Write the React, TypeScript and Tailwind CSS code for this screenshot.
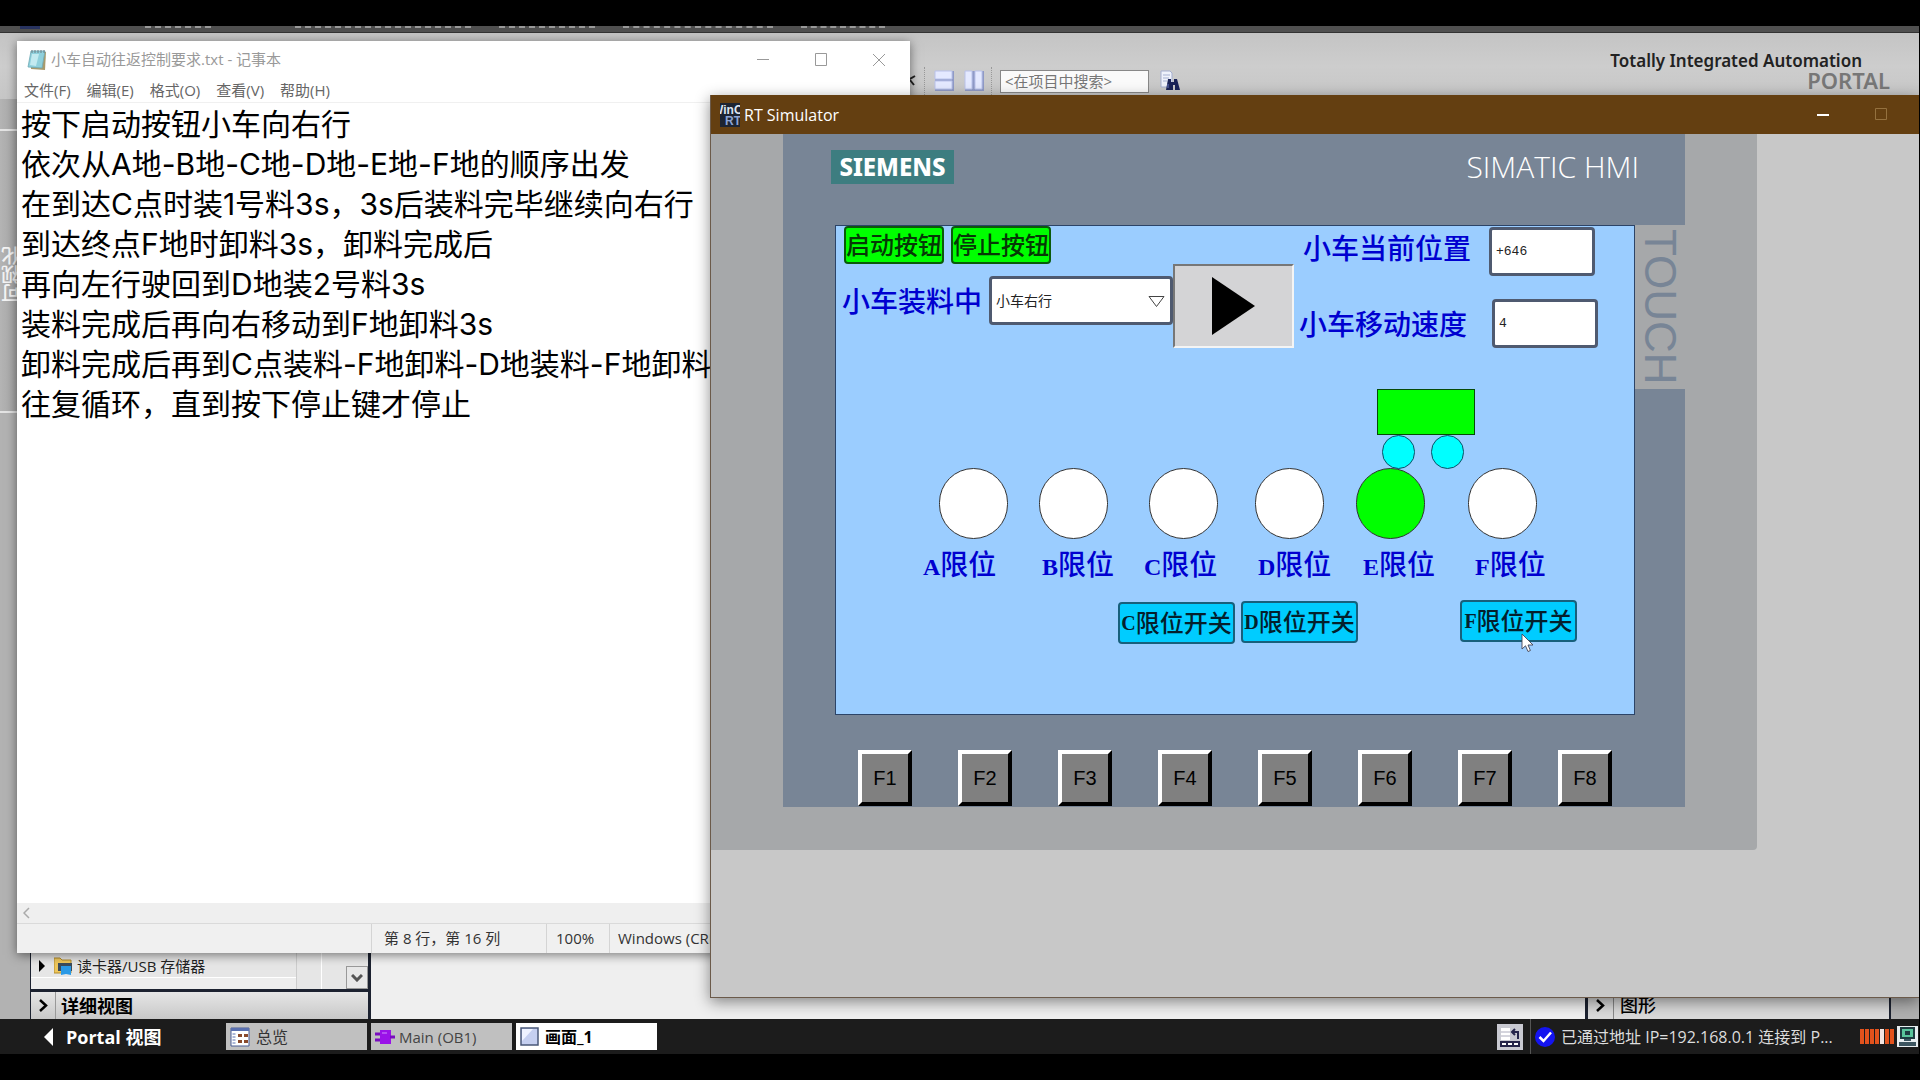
import { useState } from "react"

interface CanvasItem {
  label: string;
  left: number;
  top: number;
}

interface Lamp {
  name: string;
  left: number;
  labelLeft: number;
  active: boolean;
}

const NOTE_TEXT = [
  '按下启动按钮小车向右行',
  '依次从A地-B地-C地-D地-E地-F地的顺序出发',
  '在到达C点时装1号料3s，3s后装料完毕继续向右行',
  '到达终点F地时卸料3s，卸料完成后',
  '再向左行驶回到D地装2号料3s',
  '装料完成后再向右移动到F地卸料3s',
  '卸料完成后再到C点装料-F地卸料-D地装料-F地卸料',
  '往复循环，直到按下停止键才停止',
].join('\n');

const NOTE_MENU = ['文件(F)', '编辑(E)', '格式(O)', '查看(V)', '帮助(H)'];

// Positions on the HMI canvas
const LAMPS: Lamp[] = [
  { name: 'A', left: 103, labelLeft: 87, active: false },
  { name: 'B', left: 203, labelLeft: 206, active: false },
  { name: 'C', left: 313, labelLeft: 308, active: false },
  { name: 'D', left: 419, labelLeft: 422, active: false },
  { name: 'E', left: 520, labelLeft: 527, active: true },
  { name: 'F', left: 632, labelLeft: 639, active: false },
];

const SWITCHES: CanvasItem[] = [
  { label: 'C', left: 282, top: 376 },
  { label: 'D', left: 405, top: 375 },
  { label: 'F', left: 624, top: 374 },
];

const F_KEYS = ['F1', 'F2', 'F3', 'F4', 'F5', 'F6', 'F7', 'F8'];

function NotepadIcon() {
  return (
    <svg width="20" height="22" viewBox="0 0 20 22">
      <path d="M4 3 L19 3 L18 21 L4 20 Z" fill="#a89a6c" />
      <path d="M4 2 L18 2 L15 19 L1 18 Z" fill="#8fd0dc" stroke="#6fa9b5" strokeWidth="0.8" />
      <path d="M5 5 L12 5 L9 17 L3 16 Z" fill="#c3eaf0" />
      <path d="M5 1v3M8 1v3M11 1v3M14 1v3M17 1v3" stroke="#6d7f86" strokeWidth="1" />
    </svg>
  );
}

function Notepad() {
  const [text, setText] = useState<string>(NOTE_TEXT);

  return (
    <section className="absolute top-[41px] bottom-[127px] left-[17px] w-[893px] flex flex-col bg-white shadow-[0_2px_10px_rgba(0,0,0,0.5)]">
      <header className="flex items-center h-[37px] pl-2.5 pr-0.5 text-[15px] text-[#999999]">
        <NotepadIcon />
        <h1 className="ml-1 flex-1">小车自动往返控制要求.txt - 记事本</h1>
        <div className="flex">
          <button type="button" aria-label="最小化" className="w-[58px] h-8 flex items-center justify-center">
            <svg width="14" height="14" viewBox="0 0 14 14" stroke="#999" fill="none"><path d="M1 6.500h12" /></svg>
          </button>
          <button type="button" aria-label="最大化" className="w-[58px] h-8 flex items-center justify-center">
            <svg width="14" height="14" viewBox="0 0 14 14" stroke="#999" fill="none"><path d="M1.500 .5h11v12h-11z" /></svg>
          </button>
          <button type="button" aria-label="关闭" className="w-[58px] h-8 flex items-center justify-center">
            <svg width="14" height="14" viewBox="0 0 14 14" stroke="#999" fill="none"><path d="M1 1l12 12M13 1L1 13" /></svg>
          </button>
        </div>
      </header>
      <nav className="flex gap-4 h-[25px] pl-[7px] items-center text-[15px] leading-5 text-[#666] border-b border-[#f0f0f0]">
        {NOTE_MENU.map((item) => (
          <button key={item} type="button">{item}</button>
        ))}
      </nav>
      <textarea
        aria-label="文本内容"
        value={text}
        onChange={(e) => setText(e.target.value)}
        spellCheck={false}
        className="block flex-1 w-full resize-none overflow-hidden px-1 pt-px text-[30px] leading-10 text-black outline-none font-['Inter','Noto_Sans_CJK_SC',sans-serif]"
      />
      <div className="h-5 bg-[#efefef] flex items-center pl-1.5">
        <svg width="7" height="12" viewBox="0 0 7 12" fill="none" stroke="#aaa" strokeWidth="1.5"><path d="M6 1L1 6l5 5" /></svg>
      </div>
      <footer className="flex h-[30px] items-stretch bg-[#f0f0f0] border-t border-[#dadada] text-[15px] leading-[29px] text-[#333]">
        <span className="w-[354px]" />
        <span className="w-[175px] pl-3 border-l border-[#d4d4d4]">第 8 行，第 16 列</span>
        <span className="w-[63px] pl-[9px] border-l border-[#d4d4d4]">100%</span>
        <span className="pl-2 border-l border-[#d4d4d4] whitespace-nowrap">Windows (CRLF)</span>
      </footer>
    </section>
  );
}

function HmiScreen() {
  const [position, setPosition] = useState<string>('+646');
  const [speed, setSpeed] = useState<string>('4');
  const [state, setState] = useState<string>('小车右行');

  return (
    <div className="relative w-[800px] h-[490px] bg-[#9bcdff] border border-[#2c4468] text-[#0000d0]">
      <div className="flex items-start">
        <div className="w-[337px] pl-1.5">
          <div className="flex gap-[7px] pl-0.5 text-[#063806]">
            <button type="button" className="w-[100px] h-[38px] rounded-sm border-2 border-[#0a5a0a] bg-[#00ff00] text-2xl font-medium whitespace-nowrap flex items-center justify-center">
              启动按钮
            </button>
            <button type="button" className="w-[100px] h-[38px] rounded-sm border-2 border-[#0a5a0a] bg-[#00ff00] text-2xl font-medium whitespace-nowrap flex items-center justify-center">
              停止按钮
            </button>
          </div>
          <div className="flex items-center justify-between mt-3">
            <label htmlFor="cart-state" className="text-[28px] leading-8 font-medium">小车装料中</label>
            <div className="relative">
              <select
                id="cart-state"
                value={state}
                onChange={(e) => setState(e.target.value)}
                className="block w-[184px] h-[49px] appearance-none rounded-sm border-[3px] border-[#4f5a70] bg-white pl-1 text-sm text-[#222]"
              >
                <option>小车右行</option>
                <option>小车左行</option>
              </select>
              <svg className="absolute right-2 top-[19px] pointer-events-none" width="17" height="13" viewBox="0 0 17 13" fill="#fff" stroke="#444">
                <path d="M1 1.500h15L8.500 11.500z" />
              </svg>
            </div>
          </div>
        </div>
        <button
          type="button"
          aria-label="运行"
          className="mt-[38px] w-[121px] h-[84px] flex items-center pl-[37px] bg-[#d4d4d6] border-2 border-t-[#777] border-l-[#777] border-r-[#f4f4f4] border-b-[#f4f4f4]"
        >
          <svg width="44" height="58" viewBox="0 0 44 58"><path d="M0 0L43 29L0 58z" fill="#000" /></svg>
        </button>
        <div className="flex-1 pt-px text-[28px] leading-8 font-medium">
          <div className="flex items-center gap-[18px] pl-[9px]">
            <label htmlFor="cart-position" className="w-[168px] pb-2 whitespace-nowrap">小车当前位置</label>
            <input
              id="cart-position"
              value={position}
              onChange={(e) => setPosition(e.target.value)}
              className="w-[106px] h-[49px] rounded-sm border-[3px] border-[#4f5a70] bg-white pl-1 text-[13px] text-[#222] font-['Liberation_Mono',monospace]"
            />
          </div>
          <div className="flex items-center gap-[25px] pl-[5px] mt-[23px]">
            <label htmlFor="cart-speed" className="w-[168px] whitespace-nowrap">小车移动速度</label>
            <input
              id="cart-speed"
              value={speed}
              onChange={(e) => setSpeed(e.target.value)}
              className="w-[106px] h-[49px] rounded-sm border-[3px] border-[#4f5a70] bg-white pl-1 text-[13px] text-[#222] font-['Liberation_Mono',monospace]"
            />
          </div>
        </div>
      </div>

      {/* Cart */}
      <div className="absolute left-[541px] top-[163px] w-[98px] h-[46px] bg-[#00ff00] border border-[#074a07]" />
      <div className="absolute left-[546px] top-[209px] w-[33px] h-[34px] rounded-full bg-[#00ffff] border border-[#0d4f66]" />
      <div className="absolute left-[595px] top-[209px] w-[33px] h-[34px] rounded-full bg-[#00ffff] border border-[#0d4f66]" />

      {/* Limit lamps */}
      {LAMPS.map((lamp) => (
        <div key={lamp.name}>
          <div
            className={`absolute top-[242px] w-[69px] h-[71px] rounded-full border border-[#333] ${lamp.active ? 'bg-[#00ff00]' : 'bg-white'}`}
            style={{ left: lamp.left }}
          />
          <p
            className="absolute top-[322px] text-[28px] leading-8 font-medium whitespace-nowrap"
            style={{ left: lamp.labelLeft }}
          >
            <span className="font-['Liberation_Serif',serif] text-2xl font-bold">{lamp.name}</span>限位
          </p>
        </div>
      ))}

      {SWITCHES.map((item) => (
        <button
          key={item.label}
          type="button"
          className="absolute w-[117px] h-[42px] rounded-sm border-2 border-[#17607c] bg-[#00ccff] text-[#04202c] text-2xl font-medium whitespace-nowrap flex items-center justify-center"
          style={{ left: item.left, top: item.top }}
        >
          <span className="font-['Liberation_Serif',serif] text-xl font-bold">{item.label}</span>限位开关
        </button>
      ))}

      <svg className="absolute left-[685px] top-[407px]" width="13" height="20" viewBox="0 0 13 20">
        <path d="M1 1v15l3.500-3.200L7 18.500l2.400-1L7 12h5z" fill="#fff" stroke="#445" strokeWidth="0.9" />
      </svg>
    </div>
  );
}

function Simulator() {
  return (
    <section className="absolute top-[95px] bottom-[82px] left-[710px] right-px flex flex-col bg-[#c8c8c8] border-l border-b border-[#6b5a4a] shadow-[0_4px_14px_rgba(0,0,0,0.45)]">
      <header className="flex items-center h-[39px] pl-[9px] bg-[#643f11] text-white">
        <svg width="20" height="24" viewBox="0 0 20 24">
          <rect width="20" height="24" fill="#1d2432" />
          <text x="-8" y="11" fontSize="12" fontWeight="700" fill="#dfe6f2" fontFamily="Liberation Sans, sans-serif">WinC</text>
          <text x="5" y="22" fontSize="12" fontWeight="700" fill="#8da4d4" fontFamily="Liberation Sans, sans-serif">RT</text>
        </svg>
        <h2 className="ml-1 flex-1 text-base">RT Simulator</h2>
        <button type="button" aria-label="最小化" className="w-[58px] h-9 flex items-center justify-center">
          <svg width="12" height="12" viewBox="0 0 12 12"><path d="M0 6h12" stroke="#fff" strokeWidth="2" /></svg>
        </button>
        <button type="button" aria-label="最大化" disabled className="w-[58px] h-9 mr-[9px] flex items-center justify-center">
          <svg width="13" height="13" viewBox="0 0 13 13"><path d="M.5 .5h11v11h-11z" fill="none" stroke="#94713f" /></svg>
        </button>
      </header>
      <div className="w-[1046px] px-[72px] pb-[43px] rounded-br-sm bg-[#a6a8aa]">
        <div className="bg-[#788596]">
          <div className="h-[91px] flex items-start justify-between pl-12 pr-[46px] pt-4">
            <div className="w-[123px] h-[34px] bg-[#3d7d80] flex items-center justify-center text-white text-2xl font-extrabold font-['Noto_Sans','Open_Sans',sans-serif]">
              SIEMENS
            </div>
            <div className="text-white text-[30px] leading-[34px] font-light font-['Open_Sans',sans-serif]">SIMATIC HMI</div>
          </div>
          <div className="flex items-start pl-[52px]">
            <HmiScreen />
            <div className="flex-1 h-[164px] flex items-center justify-center bg-[#a6a8aa] text-[#788596]">
              <span className="[writing-mode:vertical-rl] text-[44px] leading-[50px] font-['Liberation_Sans',sans-serif]">TOUCH</span>
            </div>
          </div>
          <div className="flex gap-[46px] pl-[75px] pt-[35px] pb-px">
            {F_KEYS.map((key) => (
              <button
                key={key}
                type="button"
                className="w-[54px] h-14 bg-[#808080] border-4 border-t-white border-l-white border-r-black border-b-black text-black text-xl font-['Liberation_Sans',sans-serif]"
              >
                {key}
              </button>
            ))}
          </div>
        </div>
      </div>
    </section>
  );
}

function Toolbar() {
  return (
    <header className="flex items-center h-[66px] bg-linear-to-b from-[#c4c4c4] via-[#cdcdcd] to-[#c6c6c6]">
      <div className="w-[910px]" />
      <div className="flex flex-1 items-center self-stretch pt-[30px]">
        <svg width="8" height="22" viewBox="0 0 8 22"><path d="M0 9l5-3M0 10l4 5" stroke="#222" strokeWidth="2" /></svg>
        <span className="ml-1.5 h-7 border-l border-dotted border-[#999]" />
        <button type="button" aria-label="水平拆分" className="ml-[9px]">
          <svg width="21" height="22" viewBox="0 0 21 22">
            <path d="M1 1h19v20H1z" fill="#8f9ac6" />
            <path d="M1 1h17v8H1zM1 11h17v8H1z" fill="#e4e9ff" stroke="#b9c2ea" />
          </svg>
        </button>
        <button type="button" aria-label="垂直拆分" className="ml-[9px]">
          <svg width="21" height="22" viewBox="0 0 21 22">
            <path d="M1 1h19v20H1z" fill="#8f9ac6" />
            <path d="M1 1h7v18H1zM11 1h7v18h-7z" fill="#e4e9ff" stroke="#b9c2ea" />
          </svg>
        </button>
        <span className="ml-1.5 h-7 border-l border-dotted border-[#999]" />
        <input
          aria-label="在项目中搜索"
          placeholder="<在项目中搜索>"
          className="ml-2 w-[149px] h-[23px] border border-[#888] bg-[#fafafa] pl-1 text-[15px] text-[#777] placeholder:text-[#777]"
        />
        <button type="button" aria-label="搜索" className="ml-[11px]">
          <svg width="22" height="22" viewBox="0 0 22 22">
            <path d="M1 1h9l2 2v14H1z" fill="#eef1fb" stroke="#a5afd0" />
            <path d="M3 5h7M3 8h6M3 11h4" stroke="#a5afd0" />
            <path d="M8 9h3v3h3V9h3l3 11h-5v-5h-2v5H6z" fill="#1a2358" />
            <path d="M8 14v4" stroke="#6a78c0" />
          </svg>
        </button>
      </div>
      <div className="self-stretch pt-[19px] pr-[29px] text-right font-['Noto_Sans','Open_Sans',sans-serif]">
        <p className="pr-7 text-[17px] leading-[18px] font-semibold text-[#222]">Totally Integrated Automation</p>
        <p className="text-[22px] leading-5 font-semibold text-[#777]">PORTAL</p>
      </div>
    </header>
  );
}

function Taskbar() {
  return (
    <footer className="flex items-center h-[35px] bg-[#1c1c1c] text-white">
      <button type="button" className="flex items-center w-[226px] pl-11 text-lg leading-6 font-bold">
        <svg className="mr-[13px]" width="9" height="18" viewBox="0 0 9 18"><path d="M9 0v18L0 9z" fill="#fff" /></svg>
        Portal 视图
      </button>
      <div className="flex gap-1 text-base leading-6 text-[#333]">
        <button type="button" className="flex items-center gap-1.5 w-[141px] h-[27px] pl-1 bg-[#c0c0c0]">
          <svg width="20" height="20" viewBox="0 0 20 20">
            <path d="M1 1h18v18H1z" fill="#fff" stroke="#4a5c94" />
            <path d="M1 1h18v3H1z" fill="#5a70b0" />
            <path d="M2.500 7h3M2.500 10h3M2.500 13h3M2.500 16h3" stroke="#5a70b0" />
            <path d="M8 7h4v3H8zM14 7h4v3h-4zM8 13h4v3H8zM14 13h4v3h-4z" fill="#8a4a2c" />
          </svg>
          总览
        </button>
        <button type="button" className="flex items-center gap-1 w-[141px] h-[27px] pl-1 bg-[#c0c0c0] text-[#444]">
          <svg width="20" height="18" viewBox="0 0 20 18">
            <path d="M5 2h11v14H5z" fill="#9a12e8" />
            <path d="M0 6h5M0 12h5M15 9h5" stroke="#7a0cc0" strokeWidth="3" />
            <path d="M7 5h5" stroke="#d08cff" />
          </svg>
          <span className="text-[15px]">Main (OB1)</span>
        </button>
        <button type="button" className="flex items-center gap-1.5 w-[141px] h-[27px] pl-1 bg-white text-black">
          <svg width="19" height="19" viewBox="0 0 19 19">
            <path d="M1 1h17v17H1z" fill="#c5cff0" stroke="#4a5878" strokeWidth="1.5" />
            <path d="M2 2h11L2 14z" fill="#eef2ff" />
          </svg>
          <span className="font-bold">画面_1</span>
        </button>
      </div>
      <div className="flex flex-1 items-center justify-end self-stretch">
        <svg className="mr-[7px]" width="26" height="26" viewBox="0 0 26 26">
          <path d="M0 0h26v26H0z" fill="#c9cad2" />
          <path d="M4 4h9v12H4z" fill="#fff" />
          <path d="M4 8h9M4 12h9" stroke="#aab" />
          <path d="M15 8h6v7M18 5l-3 3 3 3" fill="none" stroke="#25254a" strokeWidth="2" />
          <path d="M3 17h20v6H3z" fill="#25254a" />
          <path d="M5 19h4v2H5zM11 19h4v2h-4zM17 19h4v2h-4z" fill="#fff" />
        </svg>
        <div className="flex items-center self-stretch border-l border-[#555] pl-1">
          <svg width="20" height="20" viewBox="0 0 20 20">
            <circle cx="10" cy="10" r="10" fill="#1414f0" />
            <path d="M4.500 10l4 4L16 5.500" fill="none" stroke="#fff" strokeWidth="2.500" />
          </svg>
          <span className="ml-1.5 w-[299px] text-base whitespace-nowrap text-[#ddd]">已通过地址 IP=192.168.0.1 连接到 P...</span>
        </div>
        <svg width="35" height="17" viewBox="0 0 35 17">
          <path d="M0 1h4v15H0zM5 1h4v15H5zM10 1h4v15h-4zM15 1h4v15h-4zM25 1h4v15h-4zM30 1h4v15h-4z" fill="#e2521c" />
          <path d="M20 1h4v15h-4z" fill="#f3e4e0" />
        </svg>
        <svg className="ml-0.5 mr-px" width="21" height="21" viewBox="0 0 21 21">
          <path d="M0 0h21v21H0z" fill="#e8eef0" />
          <path d="M3 1h15v12H3z" fill="#1d3b40" />
          <path d="M5 3h11v8H5z" fill="#58c49a" />
          <path d="M8 5h5v4H8z" fill="#1d3b40" />
          <path d="M7 13h7v2H7zM2 16h17v4H2z" fill="#3c5560" />
        </svg>
      </div>
    </footer>
  );
}

function Workspace() {
  return (
    <div className="flex flex-1 min-h-0 bg-[#efefef]">
      <aside className="w-[30px] flex flex-col bg-linear-to-r from-[#b4b4b4] to-[#9c9c9c]">
        <div className="h-8 border-b-2 border-[#e4e4e4]" />
        <div className="h-[282px] pt-1.5 pl-0.5 flex items-center border-b-2 border-[#e4e4e4]">
          <span className="[writing-mode:vertical-rl] rotate-180 text-[19px] leading-5 font-medium text-[#f4f4f4]">可视化</span>
        </div>
        <div className="flex-1 bg-[#b2b2b2]" />
      </aside>
      <div className="w-[341px] flex flex-col justify-end border-r-[3px] border-[#1c2230] text-black">
        <div className="flex h-[60px] items-end bg-[#e6e6e6] border-l border-[#1c2230]">
          <div className="flex-1 self-stretch flex flex-col justify-end">
            <div className="flex items-center h-[22px] pl-2 text-[15px] leading-5 text-[#222]">
              <svg width="7" height="12" viewBox="0 0 7 12"><path d="M0 0v12l6-6z" /></svg>
              <svg className="ml-2" width="19" height="20" viewBox="0 0 19 20">
                <path d="M0 2h6l2 2h9v13H0z" fill="#efc75c" stroke="#b08a2c" />
                <path d="M4 7h14v8H4z" fill="#3c4c5c" />
                <path d="M7 10h10v9l-5-1-5 1z" fill="#2b9ae6" />
              </svg>
              <span className="ml-1">读卡器/USB 存储器</span>
            </div>
            <div className="h-3 border-t border-white bg-[#ededed]" />
          </div>
          <span className="w-[25px] self-stretch border-l border-[#ccc]" />
          <span className="w-[25px] self-stretch border-l border-white" />
          <button type="button" aria-label="向下滚动" className="w-[22px] h-[23px] flex items-center justify-center bg-[#e8e8e8] border border-[#999]">
            <svg width="12" height="8" viewBox="0 0 12 8" fill="none" stroke="#555" strokeWidth="3"><path d="M1 1l5 5 5-5" /></svg>
          </button>
        </div>
        <div className="flex items-center h-[30px] border-t-[3px] border-l border-[#1c2230] bg-linear-to-b from-[#e6e6e6] to-[#c8c8c8] text-lg leading-6 font-bold">
          <span className="w-[25px] h-full flex items-center justify-center border-r border-[#999]">
            <svg width="9" height="13" viewBox="0 0 9 13" fill="none" stroke="#000" strokeWidth="2.500"><path d="M1 1l6 5.500L1 12" /></svg>
          </span>
          <span className="pl-[5px]">详细视图</span>
        </div>
      </div>
      <main className="flex-1" />
      <div className="w-[334px] flex flex-col justify-end bg-[#b0b0b0]">
        <div className="flex items-center h-7 border-l-[3px] border-[#1c2230] text-lg leading-6 font-medium">
          <div className="flex items-center w-[303px] h-full border-r-2 border-[#1c2230] bg-[#d9d9d9]">
            <span className="w-[26px] h-full flex items-center justify-center border-r border-[#888]">
              <svg width="9" height="13" viewBox="0 0 9 13" fill="none" stroke="#000" strokeWidth="2.500"><path d="M1 1l6 5.500L1 12" /></svg>
            </span>
            <span className="pl-1.5">图形</span>
          </div>
        </div>
      </div>
    </div>
  );
}

export default function App() {
  return (
    <div className="relative min-h-screen flex flex-col overflow-hidden bg-black py-[26px] pr-px font-['Open_Sans','Noto_Sans_CJK_SC',sans-serif]">
      <div className="h-[7px] bg-[#505050] border-b border-[#333] flex items-start gap-7 pl-5">
        <span className="w-5 h-[3px] bg-[#28335f]" />
        <span className="ml-[77px] w-[66px] border-t-2 border-dashed border-[#999]" />
        <span className="ml-14 w-[176px] border-t-2 border-dashed border-[#999]" />
        <span className="w-24 border-t-2 border-dashed border-[#999]" />
        <span className="w-[150px] border-t-2 border-dashed border-[#999]" />
        <span className="w-[84px] border-t-2 border-dashed border-[#999]" />
      </div>
      <Toolbar />
      <Workspace />
      <Taskbar />
      <Notepad />
      <Simulator />
    </div>
  );
}
